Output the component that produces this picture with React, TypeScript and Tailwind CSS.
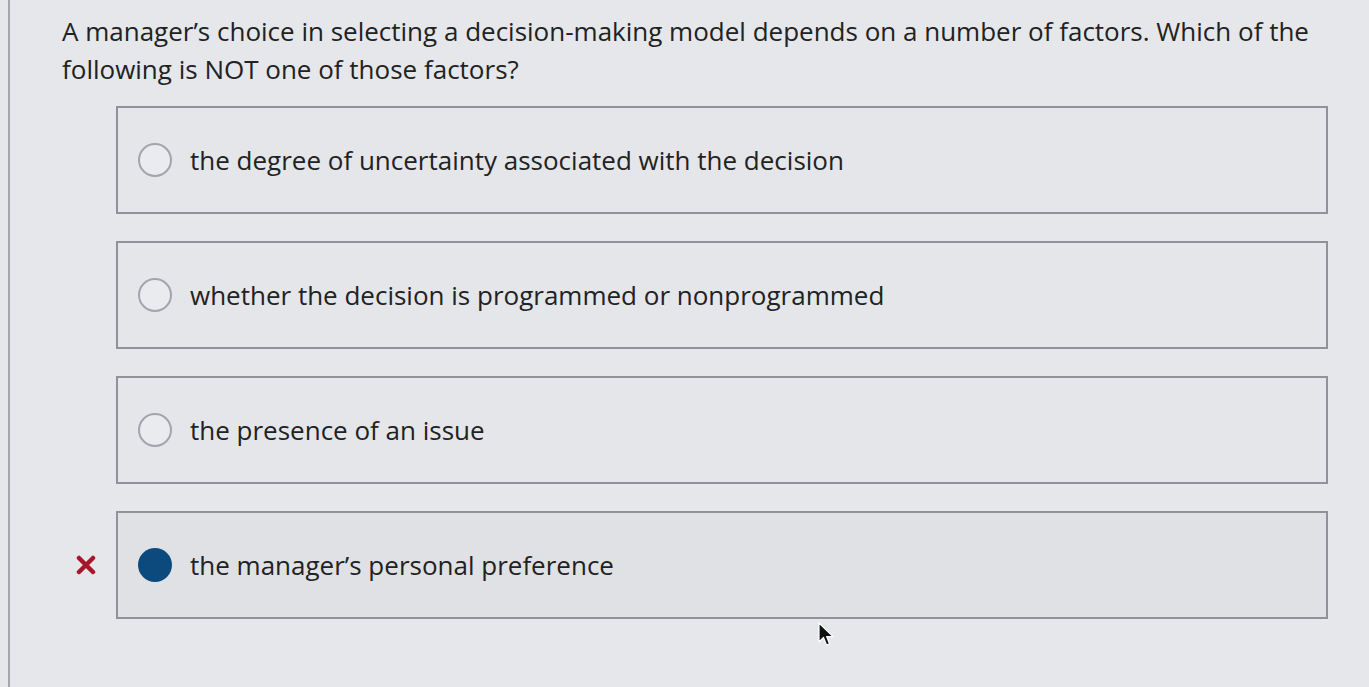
import { useState } from "react";

type Choice = { id: string; label: string };

const choices: Choice[] = [
  { id: "a", label: "the degree of uncertainty associated with the decision" },
  { id: "b", label: "whether the decision is programmed or nonprogrammed" },
  { id: "c", label: "the presence of an issue" },
  { id: "d", label: "the manager\u2019s personal preference" },
];

export default function App() {
  const [selected, setSelected] = useState<string>("d");

  return (
    <div className="relative min-h-[687px] w-full overflow-hidden bg-[#e5e7eb] font-['Open_Sans','Liberation_Sans',sans-serif] text-[#222]">
      <div className="ml-[8px] min-h-[687px] border-l-2 border-[#a4a7ab] pl-[52px] pr-[24px] pt-[12px]">
        {/* Question */}
        <p className="text-[26px] font-medium leading-[38px]">
          A manager&rsquo;s choice in selecting a decision-making model depends on a number of factors. Which of the following is NOT one of those factors?
        </p>

        {/* Choices */}
        <div className="mt-[18px] flex flex-col gap-[27px]">
          {choices.map((c) => {
            const isSel = selected === c.id;
            return (
              <div key={c.id} className="flex items-center">
                <div className="flex w-[54px] justify-center">
                  {isSel && (
                    <svg width="22" height="20" viewBox="0 0 22 20" className="-ml-[6px]">
                      <path d="M4 3 L18 17 M18 3 L4 17" stroke="#a5172b" strokeWidth="4.5" strokeLinecap="round" />
                    </svg>
                  )}
                </div>
                <button
                  onClick={() => setSelected(c.id)}
                  className={`flex h-[108px] w-[1212px] items-center border-2 border-[#8f9297] pl-[20px] text-left ${
                    isSel ? "bg-[#dfe1e5]" : "bg-[#e4e6ea]"
                  }`}
                >
                  <span
                    className={`h-[34px] w-[34px] shrink-0 rounded-full ${
                      isSel ? "bg-[#0c4a7e]" : "border-2 border-[#a2a5a9] bg-[#e9ebee]"
                    }`}
                  />
                  <span className="ml-[18px] text-[26px] font-medium leading-[34px] text-[#222]">{c.label}</span>
                </button>
              </div>
            );
          })}
        </div>
      </div>

      {/* mouse pointer */}
      <svg className="pointer-events-none absolute left-[817px] top-[622px]" width="18" height="26" viewBox="0 0 18 26">
        <path d="M2 1 L2 20 L6.5 15.5 L9.5 23 L12.5 21.8 L9.6 14.6 L16 14.6 Z" fill="#111" stroke="#fff" strokeWidth="1.2" strokeLinejoin="round" />
      </svg>
    </div>
  );
}
